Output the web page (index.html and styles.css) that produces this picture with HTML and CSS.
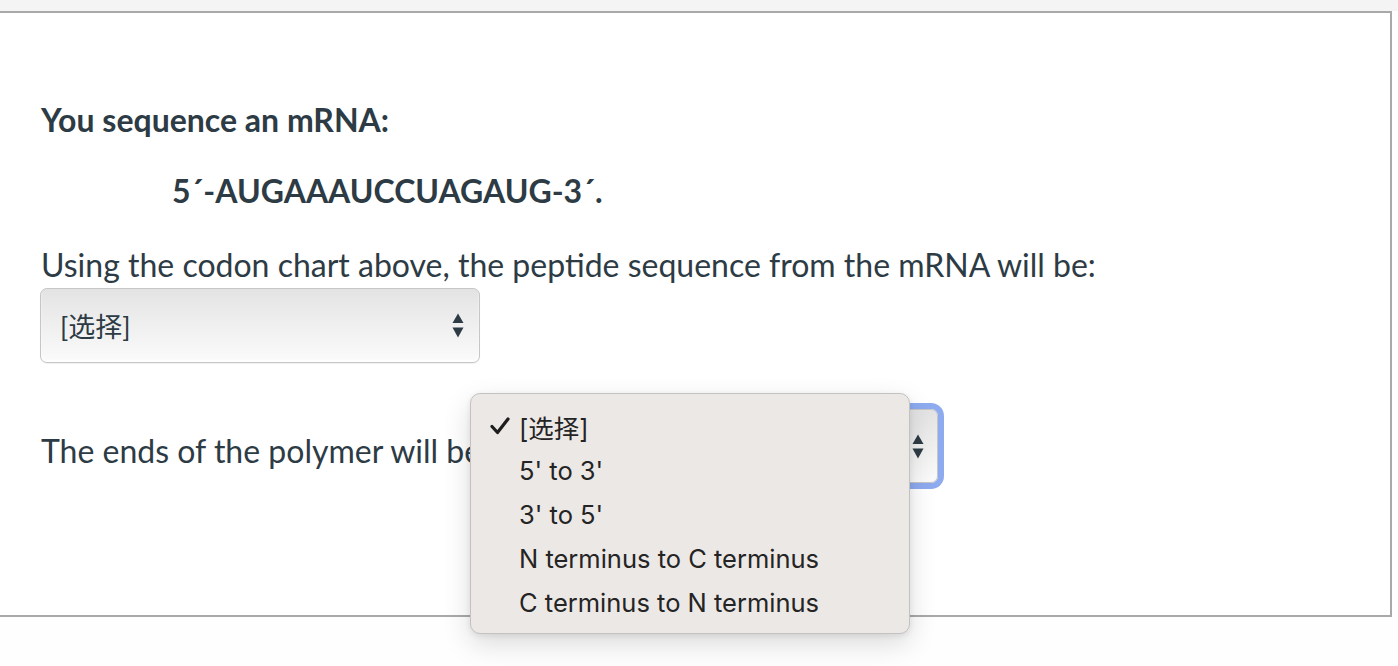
FILE: index.html
```html
<!DOCTYPE html>
<html>
<head>
<meta charset="utf-8">
<link rel="stylesheet" href="styles.css">
</head>
<body>
<div class="topbar"></div>
<div class="card">
  <p class="heading">You sequence an mRNA:</p>
  <p class="seq">5´-AUGAAAUCCUAGAUG-3´.</p>
  <p class="question">Using the codon chart above, the peptide sequence from the mRNA will be:</p>
  <div class="select">
    <span class="select-text">[选择]</span>
    <svg class="arrows" width="12" height="25" viewBox="0 0 12 25"><path d="M6 0.5 L11.5 10 L0.5 10 Z" fill="#2d3b45"/><path d="M0.5 14.5 L11.5 14.5 L6 24.5 Z" fill="#2d3b45"/></svg>
  </div>
  <div class="q2">
    <span class="label">The ends of the polymer will be</span>
    <div class="select inline focused">
      <span class="select-text">[选择]</span>
      <svg class="arrows" width="12" height="25" viewBox="0 0 12 25"><path d="M6 0.5 L11.5 10 L0.5 10 Z" fill="#2d3b45"/><path d="M0.5 14.5 L11.5 14.5 L6 24.5 Z" fill="#2d3b45"/></svg>
    </div>
  </div>
</div>
<div class="menu">
  <div class="item"><svg class="check" width="20" height="18" viewBox="0 0 20 18"><path d="M2 9.5 L7.5 15.5 L18 2" fill="none" stroke="#1e1e1e" stroke-width="3.2" stroke-linecap="round" stroke-linejoin="round"/></svg>[选择]</div>
  <div class="item"><span class="check"></span>5' to 3'</div>
  <div class="item"><span class="check"></span>3' to 5'</div>
  <div class="item"><span class="check"></span>N terminus to C terminus</div>
  <div class="item"><span class="check"></span>C terminus to N terminus</div>
</div>
</body>
</html>
```

FILE: styles.css
```css
html, body {
  margin: 0;
  padding: 0;
  background: #fefefe;
}
body {
  font-family: Lato, "Noto Sans CJK SC", sans-serif;
  color: #2d3b45;
  width: 1398px;
  height: 666px;
  overflow: hidden;
  position: relative;
}
.topbar {
  height: 11px;
  background: #f4f4f4;
}
.card {
  margin-right: 6px;
  border: 2px solid #a9a9a9;
  border-left: none;
  background: #fff;
  height: 606px;
  box-sizing: border-box;
  padding: 88px 0 0 41px;
}
.card p {
  margin: 0;
}
.heading {
  font-weight: 700;
  font-size: 32px;
  line-height: 38px;
}
.seq {
  font-weight: 700;
  font-size: 32px;
  line-height: 38px;
  margin-top: 33px !important;
  padding-left: 131px;
}
.question {
  font-size: 32px;
  line-height: 38px;
  margin-top: 36px !important;
}
.select {
  display: flex;
  align-items: center;
  justify-content: space-between;
  box-sizing: border-box;
  width: 440px;
  height: 75px;
  margin-top: 4px;
  margin-left: -1px;
  padding: 0 15px 0 19px;
  border: 1px solid #c6c6c6;
  border-radius: 7px;
  background: linear-gradient(#e3e3e3 0%, #ededed 40%, #f5f5f5 75%, #fbfbfb 100%);
  box-shadow: inset 0 -2px 2px rgba(255,255,255,0.9), 0 1px 1px rgba(0,0,0,0.06);
}
.select-text {
  font-size: 27px;
  color: #2d3b45;
}
.q2 {
  margin-top: 46px;
  display: flex;
  align-items: flex-start;
}
.label {
  font-size: 32px;
  line-height: 38px;
  margin-top: 23px;
}
.inline {
  margin: 0 0 0 17px;
  width: 440px;
  height: 74px;
  padding-right: 13px;
}
.focused {
  box-shadow: 0 0 0 6px #8eabf0;
}
.menu {
  position: absolute;
  left: 470px;
  top: 393px;
  width: 440px;
  height: 241px;
  box-sizing: border-box;
  background: #ece8e6;
  border: 1px solid #c4c2c1;
  border-radius: 10px;
  box-shadow: 0 10px 28px rgba(0,0,0,0.14), 0 2px 6px rgba(0,0,0,0.08);
  padding-top: 10px;
  font-family: Inter, "Noto Sans CJK SC", sans-serif;
  font-size: 25.5px;
  color: #242424;
}
.item {
  display: flex;
  align-items: center;
  height: 44px;
  padding-left: 19px;
}
.check {
  display: inline-block;
  width: 20px;
  margin-right: 9px;
  flex: none;
}
```
